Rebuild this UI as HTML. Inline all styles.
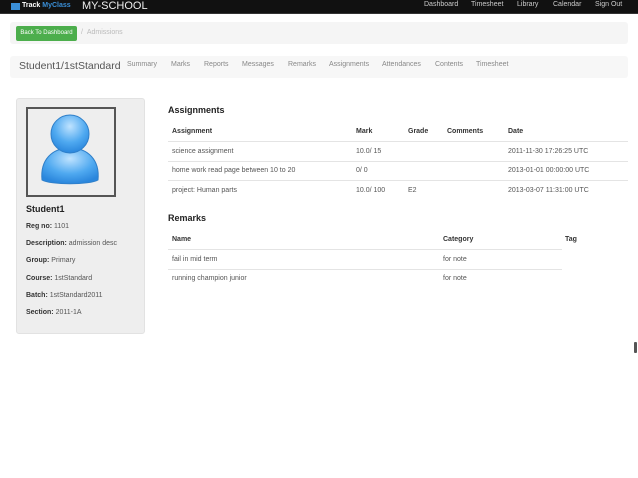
<!DOCTYPE html>
<html><head><meta charset="utf-8"><style>
*{margin:0;padding:0;box-sizing:border-box}
body{width:638px;height:478px;background:#fff;font-family:"Liberation Sans",sans-serif;color:#333;position:relative;overflow:hidden;font-size:7px}
.a{position:absolute;white-space:nowrap}
.top{left:0;top:0;width:638px;height:14px;background:#111;border-bottom:1px solid #333}
.nav{color:#ccc;font-size:7px;top:1px}
.line{position:absolute;height:1px;background:#e4e4e4}
.b{font-weight:bold}
.sub{color:#888;font-size:7px;top:61px}
</style></head><body>
<div class="a top"></div>
<div class="a" style="left:11px;top:3px;width:9px;height:7px;background:#3a8fd8"></div>
<div class="a b" style="left:22px;top:2px;font-size:7px;color:#fff">Track <span style="color:#3a8fd8">MyClass</span></div>
<div class="a" style="left:82px;top:0px;font-size:11px;color:#eee">MY-SCHOOL</div>
<div class="a nav" style="left:424px">Dashboard</div>
<div class="a nav" style="left:471px">Timesheet</div>
<div class="a nav" style="left:517px">Library</div>
<div class="a nav" style="left:553px">Calendar</div>
<div class="a nav" style="left:595px">Sign Out</div>

<div class="a" style="left:10px;top:22px;width:618px;height:22px;background:#f5f5f5;border-radius:3px"></div>
<div class="a" style="left:16px;top:26px;width:61px;height:15px;background:#4cae4c;border-radius:2px;color:#fff;font-size:6px;line-height:15px;text-align:center">Back To Dashboard</div>
<div class="a" style="left:81px;top:29px;color:#bbb;font-size:7px">/ &nbsp;Admissions</div>

<div class="a" style="left:10px;top:56px;width:618px;height:22px;background:#f7f7f7;border-radius:3px"></div>
<div class="a" style="left:19px;top:60px;font-size:10.5px;color:#555">Student1/1stStandard</div>
<div class="a sub" style="left:127px">Summary</div>
<div class="a sub" style="left:171px">Marks</div>
<div class="a sub" style="left:204px">Reports</div>
<div class="a sub" style="left:242px">Messages</div>
<div class="a sub" style="left:288px">Remarks</div>
<div class="a sub" style="left:329px">Assignments</div>
<div class="a sub" style="left:382px">Attendances</div>
<div class="a sub" style="left:435px">Contents</div>
<div class="a sub" style="left:476px">Timesheet</div>

<div class="a" style="left:16px;top:98px;width:129px;height:236px;background:#eee;border:1px solid #e2e2e2;border-radius:3px"></div>
<div class="a" style="left:26px;top:107px;width:90px;height:90px;border:2px solid #555;background:#eee"></div>
<svg class="a" style="left:26px;top:107px" width="90" height="90" viewBox="26 107 90 90">
<defs><radialGradient id="g" cx="50%" cy="30%" r="70%"><stop offset="0" stop-color="#bfe3ff"/><stop offset="0.6" stop-color="#4fa9f0"/><stop offset="1" stop-color="#2a86dc"/></radialGradient></defs>
<path d="M42 180 C40 160 52 148 70 148 C88 148 100 160 98 180 C90 185 50 185 42 180Z" fill="url(#g)" stroke="#2f7fc9" stroke-width="1"/>
<circle cx="70" cy="134" r="19" fill="url(#g)" stroke="#2f7fc9" stroke-width="1"/>
</svg>
<div class="a b" style="left:26px;top:204px;font-size:9px;color:#222">Student1</div>
<div class="a" style="left:26px;top:223px;color:#555"><b style="color:#333">Reg no:</b> 1101</div>
<div class="a" style="left:26px;top:240px;color:#555"><b style="color:#333">Description:</b> admission desc</div>
<div class="a" style="left:26px;top:257px;color:#555"><b style="color:#333">Group:</b> Primary</div>
<div class="a" style="left:26px;top:275px;color:#555"><b style="color:#333">Course:</b> 1stStandard</div>
<div class="a" style="left:26px;top:292px;color:#555"><b style="color:#333">Batch:</b> 1stStandard2011</div>
<div class="a" style="left:26px;top:309px;color:#555"><b style="color:#333">Section:</b> 2011-1A</div>

<div class="a b" style="left:168px;top:105px;font-size:9px;color:#222">Assignments</div>
<div class="a b" style="left:172px;top:128px">Assignment</div>
<div class="a b" style="left:356px;top:128px">Mark</div>
<div class="a b" style="left:408px;top:128px">Grade</div>
<div class="a b" style="left:447px;top:128px">Comments</div>
<div class="a b" style="left:508px;top:128px">Date</div>
<div class="line" style="left:168px;top:141px;width:460px"></div>
<div class="a" style="left:172px;top:148px;color:#555">science assignment</div>
<div class="a" style="left:356px;top:148px;color:#555">10.0/ 15</div>
<div class="a" style="left:508px;top:148px;color:#555">2011-11-30 17:26:25 UTC</div>
<div class="line" style="left:168px;top:161px;width:460px"></div>
<div class="a" style="left:172px;top:167px;color:#555">home work read page between 10 to 20</div>
<div class="a" style="left:356px;top:167px;color:#555">0/ 0</div>
<div class="a" style="left:508px;top:167px;color:#555">2013-01-01 00:00:00 UTC</div>
<div class="line" style="left:168px;top:180px;width:460px"></div>
<div class="a" style="left:172px;top:187px;color:#555">project: Human parts</div>
<div class="a" style="left:356px;top:187px;color:#555">10.0/ 100</div>
<div class="a" style="left:408px;top:187px;color:#555">E2</div>
<div class="a" style="left:508px;top:187px;color:#555">2013-03-07 11:31:00 UTC</div>

<div class="a b" style="left:168px;top:213px;font-size:9px;color:#222">Remarks</div>
<div class="a b" style="left:172px;top:236px">Name</div>
<div class="a b" style="left:443px;top:236px">Category</div>
<div class="a b" style="left:565px;top:236px">Tag</div>
<div class="line" style="left:168px;top:249px;width:394px"></div>
<div class="a" style="left:172px;top:256px;color:#555">fail in mid term</div>
<div class="a" style="left:443px;top:256px;color:#555">for note</div>
<div class="line" style="left:168px;top:269px;width:394px"></div>
<div class="a" style="left:172px;top:275px;color:#555">running champion junior</div>
<div class="a" style="left:443px;top:275px;color:#555">for note</div>

<div class="a" style="left:634px;top:342px;width:3px;height:11px;background:#555;border-radius:1px"></div>
</body></html>
